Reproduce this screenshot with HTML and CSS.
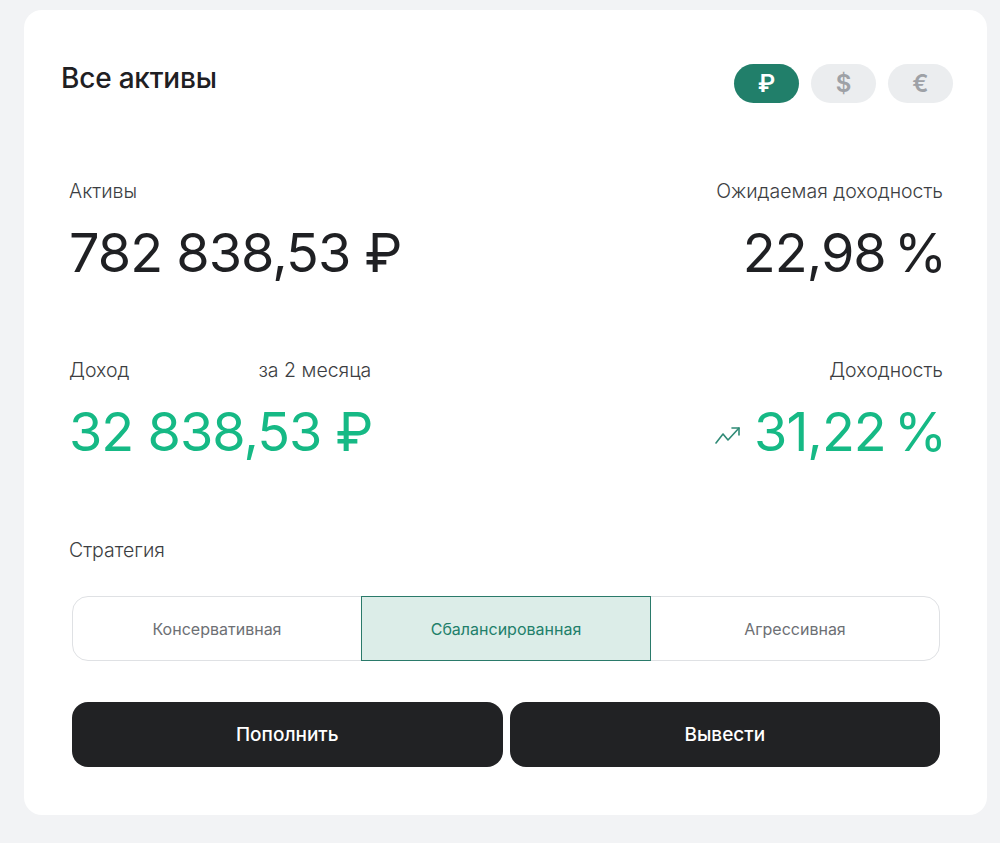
FILE: index.html
```html
<!DOCTYPE html>
<html lang="ru">
<head>
<meta charset="utf-8">
<link rel="stylesheet" href="styles.css">
</head>
<body>
<div class="card">
  <div class="head">
    <h1 class="title">Все активы</h1>
    <div class="cur">
      <button class="pill active">₽</button>
      <button class="pill">$</button>
      <button class="pill">€</button>
    </div>
  </div>

  <div class="row row1">
    <div class="cell">
      <div class="label">Активы</div>
      <div class="big">782 838,53 ₽</div>
    </div>
    <div class="cell right">
      <div class="label">Ожидаемая доходность</div>
      <div class="big pct">22,98 %</div>
    </div>
  </div>

  <div class="row row2">
    <div class="cell">
      <div class="label labels"><span>Доход</span><span class="period">за 2 месяца</span></div>
      <div class="big green">32 838,53 ₽</div>
    </div>
    <div class="cell right">
      <div class="label">Доходность</div>
      <div class="big green pct withicon">
        <svg class="trend" width="30" height="20" viewBox="0 0 30 20" fill="none" stroke="#2f8a76" stroke-width="1.6" stroke-linecap="round" stroke-linejoin="round">
          <path d="M2 18 L9 9 L14 15 L25 3"/>
          <path d="M18 3 H25 V10"/>
        </svg>
        <span>31,22 %</span>
      </div>
    </div>
  </div>

  <div class="label strat-label">Стратегия</div>
  <div class="seg">
    <div class="seg-item">Консервативная</div>
    <div class="seg-item sel">Сбалансированная</div>
    <div class="seg-item">Агрессивная</div>
  </div>

  <div class="actions">
    <button class="btn">Пополнить</button>
    <button class="btn">Вывести</button>
  </div>
</div>
</body>
</html>
```

FILE: styles.css
```css
* { box-sizing: border-box; }
html, body { margin: 0; padding: 0; }
body {
  background: #f2f3f5;
  font-family: Inter, "Noto Sans", sans-serif;
  color: #222325;
  width: 1000px;
  height: 843px;
  padding: 10px 13px 0 24px;
}
.card {
  background: #fff;
  border-radius: 18px;
  width: 963px;
  height: 805px;
  padding: 54px 34px 0 37px;
}
.head {
  display: flex;
  justify-content: space-between;
  align-items: flex-start;
}
.title {
  margin: 0;
  font-size: 28px;
  font-weight: 500;
  line-height: 28px;
  color: #1f2023;
  letter-spacing: -0.2px;
}
.cur {
  display: flex;
  gap: 12px;
}
.pill {
  width: 65px;
  height: 39px;
  border: none;
  border-radius: 20px;
  background: #ebedef;
  color: #9ea1a6;
  font-family: Inter, sans-serif;
  font-size: 24px;
  font-weight: 600;
  padding: 0;
  display: flex;
  align-items: center;
  justify-content: center;
}
.pill.active {
  background: #217f6a;
  color: #fff;
}
.row {
  display: flex;
  justify-content: space-between;
  padding: 0 10px 0 8px;
}
.row1 { margin-top: 76px; }
.row2 { margin-top: 75px; }
.cell { display: flex; flex-direction: column; }
.cell.right { align-items: flex-end; }
.label {
  font-size: 19.5px;
  line-height: 24px;
  color: #3c3e42;
  font-weight: 300;
}
.labels { display: flex; }
.period { margin-left: 129px; }
.big {
  margin-top: 20px;
  font-size: 54px;
  line-height: 60px;
  font-weight: 400;
  color: #1f2023;
  letter-spacing: -1px;
  margin-right: -1px;
}
.right .big { margin-right: -3px; }
.pct { word-spacing: -6px; }
.green { color: #16b985; }
.withicon { display: flex; align-items: center; gap: 10px; }
.trend { margin-top: 6px; }
.strat-label { margin: 76px 0 0 8px; }
.seg {
  margin: 34px 0 0 11px;
  width: 868px;
  height: 65px;
  display: flex;
  border: 1px solid #dfe1e4;
  border-radius: 16px;
}
.seg-item {
  flex: 1;
  display: flex;
  align-items: center;
  justify-content: center;
  font-size: 16px;
  color: #6d7074;
}
.seg-item.sel {
  background: #dcede8;
  border: 1px solid #2a7a6a;
  margin: -1px 0;
  color: #217f6a;
}
.actions {
  margin: 41px 0 0 11px;
  width: 868px;
  display: flex;
  gap: 7px;
}
.btn {
  flex: 1;
  height: 65px;
  border: none;
  border-radius: 16px;
  background: #212224;
  color: #fff;
  font-family: Inter, sans-serif;
  font-size: 19px;
  font-weight: 500;
}
```
